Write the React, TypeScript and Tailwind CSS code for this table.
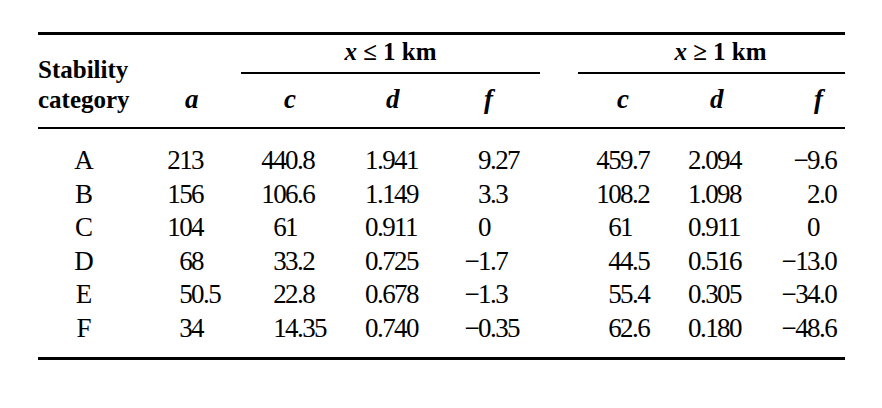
const rows = [
  { cat: 'A', v: ['213', '440.8', '1.941', '9.27', '459.7', '2.094', '−9.6'] },
  { cat: 'B', v: ['156', '106.6', '1.149', '3.3', '108.2', '1.098', '2.0'] },
  { cat: 'C', v: ['104', '61', '0.911', '0', '61', '0.911', '0'] },
  { cat: 'D', v: ['68', '33.2', '0.725', '−1.7', '44.5', '0.516', '−13.0'] },
  { cat: 'E', v: ['50.5', '22.8', '0.678', '−1.3', '55.4', '0.305', '−34.0'] },
  { cat: 'F', v: ['34', '14.35', '0.740', '−0.35', '62.6', '0.180', '−48.6'] },
]

// value columns: width of the integer part (decimal alignment) + header placement
const cols = [
  { label: 'a', int: 'w-[53px]', head: 'col-start-2 pl-[35px]' },
  { label: 'c', int: 'w-[56px]', head: 'col-start-3 pl-[43px]' },
  { label: 'd', int: 'w-[37px]', head: 'col-start-4 pl-[46px]' },
  { label: 'f', int: 'w-[60px]', head: 'col-start-5 pl-[54px]' },
  { label: 'c', int: 'w-[54px]', head: 'col-start-7 pl-[39px]' },
  { label: 'd', int: 'w-[35px]', head: 'col-start-8 pl-[45px]' },
  { label: 'f', int: 'w-[59px]', head: 'col-start-9 pl-[54px]' },
]

const grid = 'grid grid-cols-[112px_91px_99px_90px_110px_38px_87px_95px_85px]'

const Num = ({ v, intW }: { v: string; intW: string }) => {
  const [i, f] = v.split('.')
  return (
    <div className="flex">
      <span className={`${intW} text-right`}>{i}</span>
      {f !== undefined && <span>.{f}</span>}
    </div>
  )
}

export default function App() {
  return (
    <div className="min-h-[408px] w-[882px] bg-white pt-[32px] pl-[38px] text-black font-['Liberation_Serif','Times_New_Roman',serif]">
      <div className="w-[807px]">
        <div className="h-[3px] bg-black" />

        {/* header */}
        <div className={grid}>
          <div className="row-span-2 col-start-1 row-start-1 flex flex-col justify-end pb-[12px] text-[25px] leading-[30px] font-bold">
            <span>Stability</span>
            <span>category</span>
          </div>
          <div className="col-start-3 col-span-3 row-start-1 text-center text-[25px] leading-[34px] font-bold pb-[3px] border-b-2 border-black">
            <i>x</i> ≤ 1 km
          </div>
          <div className="col-start-7 col-span-3 row-start-1 text-center text-[25px] leading-[34px] font-bold pb-[3px] pl-[18px] border-b-2 border-black">
            <i>x</i> ≥ 1 km
          </div>
          {cols.map((c, k) => (
            <div key={k} className={`${c.head} row-start-2 pt-[8px] pb-[11px] text-[27px] leading-[34px] font-bold italic`}>
              {c.label}
            </div>
          ))}
        </div>

        <div className="h-[2px] bg-black" />

        {/* body */}
        <div className="pt-[15px] pb-[11px] text-[27px] tracking-[-1.6px]">
          {rows.map((r) => (
            <div key={r.cat} className={`${grid} h-[33.6px] leading-[33.6px]`}>
              <div className="text-center pr-[20px] tracking-normal">{r.cat}</div>
              {r.v.slice(0, 4).map((v, k) => (
                <Num key={k} v={v} intW={cols[k].int} />
              ))}
              <div />
              {r.v.slice(4).map((v, k) => (
                <Num key={k} v={v} intW={cols[k + 4].int} />
              ))}
            </div>
          ))}
        </div>

        <div className="h-[3px] bg-black" />
      </div>
    </div>
  )
}
